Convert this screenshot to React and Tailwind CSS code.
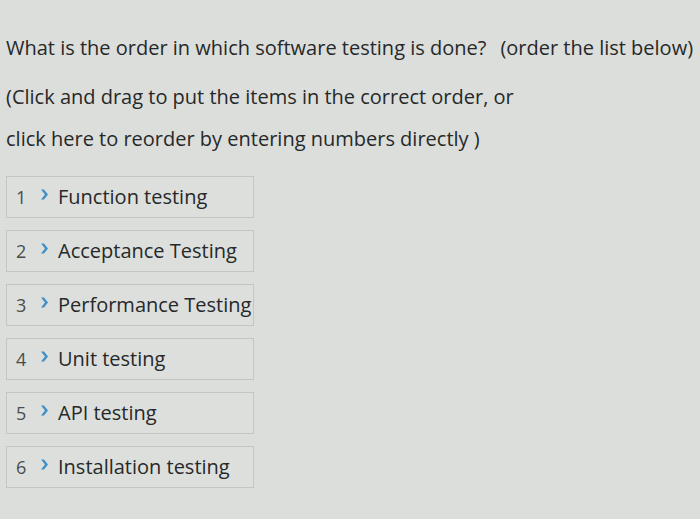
import React from "react";

const items = [
  "Function testing",
  "Acceptance Testing",
  "Performance Testing",
  "Unit testing",
  "API testing",
  "Installation testing",
];

function Chevron() {
  return (
    <svg width="9" height="11" viewBox="0 0 9 11" className="shrink-0 -mt-[6px]">
      <path d="M1 0.5 L4 0.5 L8 5.5 L4 10.5 L1 10.5 L5 5.5 Z" fill="#3f8ec6" />
    </svg>
  );
}

export default function App() {
  return (
    <div
      className="w-[700px] h-[519px] bg-[#dcdedc] text-[#262929] overflow-hidden pl-[6px] pt-[34px]"
      style={{ fontFamily: '"Open Sans", sans-serif' }}
    >
      <div className="text-[20px] leading-[28px] font-medium whitespace-nowrap">
        What is the order in which software testing is done?
        <span className="ml-[14px]">(order the list below)</span>
      </div>
      <div className="mt-[21px] text-[20px] leading-[28px] font-medium whitespace-nowrap">
        (Click and drag to put the items in the correct order, or
      </div>
      <div className="mt-[14px] text-[20px] leading-[28px] font-medium whitespace-nowrap">
        click here to reorder by entering numbers directly )
      </div>
      <div className="mt-[23px] flex flex-col gap-[12px]">
        {items.map((t, i) => (
          <div
            key={t}
            className="w-[248px] h-[42px] border border-[#c4c6c4] bg-[#dddfdd] flex items-center pl-[9px]"
          >
            <span className="text-[18px] text-[#4a4c4c] w-[24px]">{i + 1}</span>
            <Chevron />
            <span className="ml-[9px] text-[20px] font-medium text-[#262929] whitespace-nowrap">{t}</span>
          </div>
        ))}
      </div>
    </div>
  );
}
